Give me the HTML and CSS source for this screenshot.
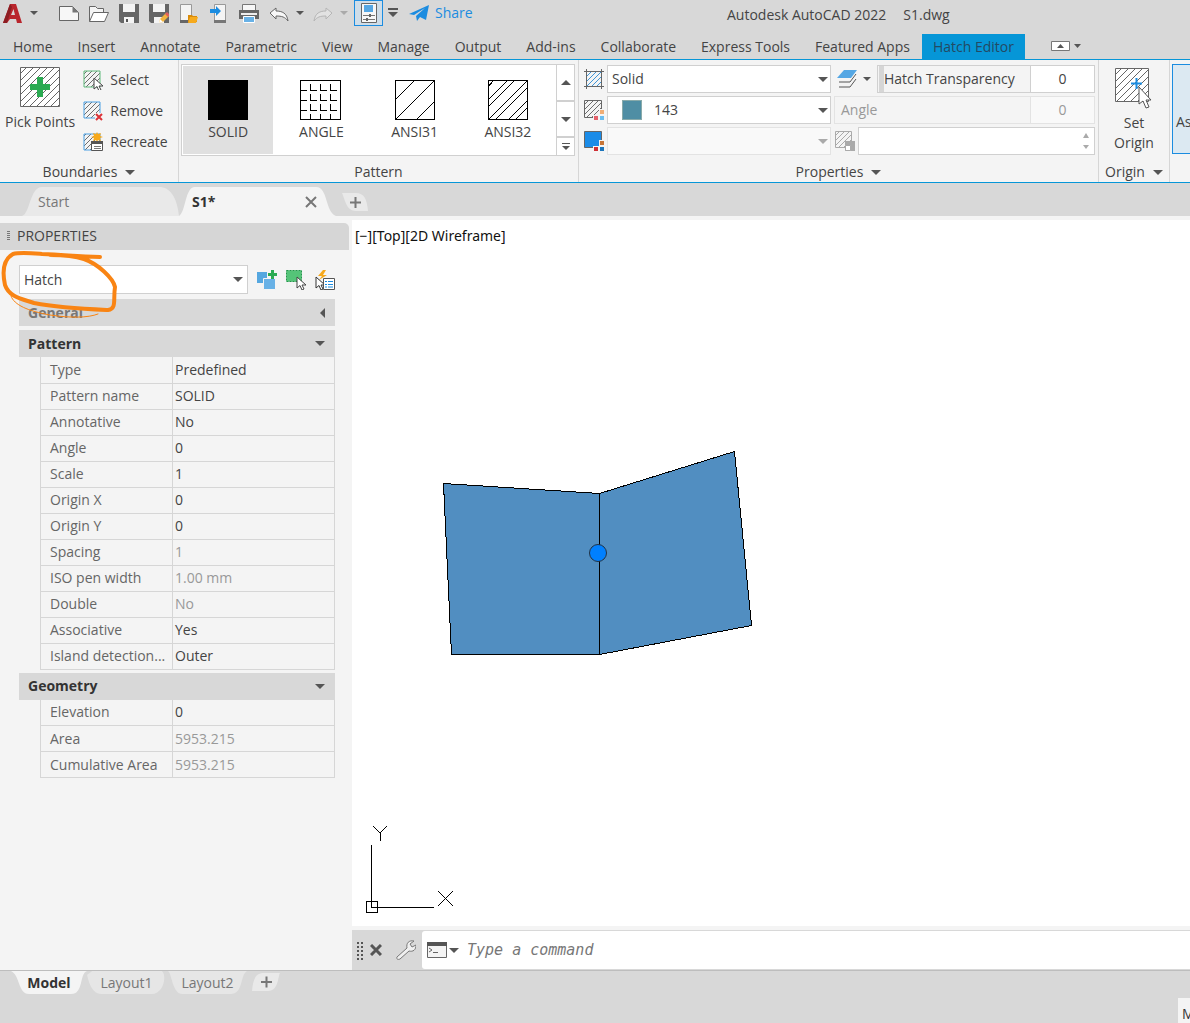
FILE: index.html
```html
<!DOCTYPE html>
<html lang="en">
<head>
<meta charset="utf-8">
<meta name="viewport" content="width=device-width, initial-scale=1">
<title>Autodesk AutoCAD 2022 - S1.dwg</title>
<link rel="stylesheet" href="styles.css">
</head>
<body>
<svg class="defs" width="0" height="0" aria-hidden="true">
  <defs>
    <pattern id="hatch" width="7" height="7" patternUnits="userSpaceOnUse"><path d="M-1 8L8-1M-1 1L1-1M6 8L8 6" stroke="#666" fill="none"/></pattern>
    <pattern id="hatch-fine" width="5" height="5" patternUnits="userSpaceOnUse"><path d="M-1 6L6-1M-1 1L1-1M4 6L6 4" stroke="#6d6d6d" fill="none"/></pattern>
    <pattern id="hatch-blue" width="5" height="5" patternUnits="userSpaceOnUse"><path d="M-1 6L6-1M-1 1L1-1M4 6L6 4" stroke="#3f95d6" fill="none"/></pattern>
    <pattern id="hatch-light" width="5" height="5" patternUnits="userSpaceOnUse"><path d="M-1 6L6-1M-1 1L1-1M4 6L6 4" stroke="#aaa" fill="none"/></pattern>
    <path id="cursor" d="M0 0V11L3 8.500L5 13L7 12L5 8H9Z"/>
  </defs>
</svg>

<header class="titlebar">
  <div class="quick">
    <button class="app" aria-label="Application menu"><svg width="20" height="20"><path d="M0 20L7 1h6l6 19h-5l-1-4H7l-3 4zM8 12h4l-1.500-6z" fill="#b9252c" fill-rule="evenodd"/><path d="M0 20L7 1l2 3-5 16z" fill="#8c1d22"/></svg><i class="arrow"></i></button>
    <button aria-label="New"><svg width="20" height="20"><path d="M.5 3.500h13l6 6v8H.5z" fill="#f7f7f7" stroke="#666"/><path d="M13.500 3.500v6h6z" fill="#777"/></svg></button>
    <button aria-label="Open"><svg width="20" height="20"><path d="M.5 18.500v-15h6l2 2h6v4" fill="#f4f4f4" stroke="#666"/><path d="M.5 18.500l4-9h15l-4 9z" fill="#fff" stroke="#666"/></svg></button>
    <button aria-label="Save"><svg width="20" height="20"><path d="M0 1h20v19H2l-2-2z" fill="#666"/><path d="M4 1h12v8H4zM5 14h10v6H5z" fill="#f4f4f4"/><path d="M7 16h2v3H7z" fill="#555"/></svg></button>
    <button aria-label="Save as"><svg width="20" height="20"><path d="M0 1h20v19H2l-2-2z" fill="#666"/><path d="M4 1h12v8H4zM5 14h10v6H5z" fill="#f4f4f4"/><path d="M10 20l1-4 6-6 3 3-6 6z" fill="#f3b43d"/><path d="M16 11l2-2 3 3-2 2z" fill="#e0605a"/><path d="M10 20l1-4 3 3z" fill="#fff"/></svg></button>
    <button aria-label="Open from mobile"><svg width="20" height="20"><path d="M1.500 1.500h11v17h-11z" fill="#f4f4f4" stroke="#999"/><path d="M1 17h9v3H1z" fill="#666"/><path d="M9 12h4l1 1h4v6H9z" fill="#d88b0b"/><path d="M11 14h8l-2 6H9z" fill="#f6aa1d"/></svg></button>
    <button aria-label="Save to mobile"><svg width="20" height="20"><path d="M5.500 1.500h11v17h-11z" fill="#f4f4f4" stroke="#999"/><path d="M5 17h12v3H5z" fill="#777"/><path d="M1 6h6V3l5 5-5 5v-3H1z" fill="#1b8ce0"/></svg></button>
    <button aria-label="Plot"><svg width="20" height="20"><path d="M3.500 1.500h13v6h-13z" fill="#f7f7f7" stroke="#777"/><path d="M0 7h20v9H0z" fill="#666"/><path d="M2 10h16v2H2z" fill="#eee"/><path d="M4.500 13.500h11v6h-11z" fill="#68b1e6" stroke="#fff"/></svg></button>
    <button aria-label="Undo"><svg width="20" height="20"><path d="M1 10l6-5v3c6 0 11 2 12 10-3-4-6-5-12-5v3z" fill="#f7f7f7" stroke="#666"/></svg></button>
    <button class="narrow" aria-label="Undo list"><i class="arrow"></i></button>
    <button aria-label="Redo"><svg width="20" height="20"><path d="M19 10l-6-5v3c-6 0-11 2-12 10 3-4 6-5 12-5v3z" fill="#e2e2e2" stroke="#b5b5b5"/></svg></button>
    <button class="narrow" aria-label="Redo list"><i class="arrow dim"></i></button>
    <button class="active" aria-label="Properties"><svg width="16" height="20"><path d="M.5.500h15v19H.5z" fill="#f7f7f7" stroke="#666"/><path d="M3 2h9v7H3z" fill="#55a7e4"/><path d="M2 12.500h12M2 16.500h12" stroke="#777"/><path d="M8 11h2v3H8zM5 15h2v3H5z" fill="#666"/></svg></button>
    <button class="more" aria-label="Customize"><svg width="12" height="10"><path d="M1 0h10v2H1zM1 4h10l-5 5z" fill="#555"/></svg></button>
    <a class="share" href="#"><svg width="20" height="18"><path d="M0 10L20 1l-3 15-6-3-3 4-1-5 9-8-11 7z" fill="#1b8ce0"/></svg>Share</a>
  </div>
  <h1 class="caption"><span>Autodesk AutoCAD 2022</span><span>S1.dwg</span></h1>
</header>

<nav class="menu">
  <a href="#">Home</a><a href="#">Insert</a><a href="#">Annotate</a><a href="#">Parametric</a><a href="#">View</a><a href="#">Manage</a><a href="#">Output</a><a href="#">Add-ins</a><a href="#">Collaborate</a><a href="#">Express Tools</a><a href="#">Featured Apps</a><a href="#" class="current">Hatch Editor</a>
  <button class="collapse" aria-label="Minimize ribbon"><svg width="30" height="11"><path d="M.5.500h18v9h-18z" fill="#fff" stroke="#777"/><path d="M6 7h7l-3.500-4zM23 3h7l-3.500 4z" fill="#555"/></svg></button>
</nav>

<section class="ribbon">
  <div class="panel boundaries">
    <div class="panel-body">
      <button class="big"><svg width="40" height="40"><path d="M.5.500h39v39H.5z" fill="#fff"/><path d="M.5.500h39v39H.5z" fill="url(#hatch)" stroke="#666"/><path d="M17 10h6v7h7v6h-7v7h-6v-7h-7v-6h7z" fill="#2bab52"/></svg>Pick Points</button>
      <div class="stack">
        <button><svg width="20" height="20"><path d="M1 1h16v16H1z" fill="url(#hatch-fine)" stroke="#5fb97a"/><use href="#cursor" x="11" y="8" fill="#fff" stroke="#444"/></svg>Select</button>
        <button><svg width="20" height="20"><path d="M1 1h16v16H1z" fill="url(#hatch-fine)" stroke="#4aa0e4"/><path d="M12 12h8v8h-8z" fill="#f4f4f4"/><path d="M13 13l6 6m0-6l-6 6" stroke="#dc3237" stroke-width="2"/></svg>Remove</button>
        <button><svg width="20" height="20"><path d="M1 2h16v16H1z" fill="url(#hatch-fine)" stroke="#4aa0e4"/><path d="M14 0l1 2 3-1-1 3 3 1-3 1 1 3-3-1-1 2-1-2-3 1 1-3-3-1 3-1-1-3 3 1z" fill="#f7a91b"/><path d="M8.500 9.500h11v9h-11z" fill="#fff" stroke="#555"/><path d="M8 9h12v3H8z" fill="#555"/><path d="M11 14.500h7M11 16.500h7" stroke="#777"/></svg>Recreate</button>
      </div>
    </div>
    <button class="panel-title">Boundaries<i class="arrow big-arrow"></i></button>
  </div>

  <div class="panel pattern">
    <div class="gallery">
      <button class="swatch selected"><svg width="40" height="40"><path d="M0 0h40v40H0z"/></svg>SOLID</button>
      <button class="swatch"><svg width="42" height="40" shape-rendering="crispEdges" fill="none" stroke="#000"><path d="M.5.500h40v39H.5zM0 10.500h7M0 20.500h7M0 30.500h7M10.500 4v6.500H17M20.500 4v6.500H27M30.500 4v6.500H37M10.500 14v6.500H17M20.500 14v6.500H27M30.500 14v6.500H37M10.500 24v6.500H17M20.500 24v6.500H27M30.500 24v6.500H37M10.500 34v6M20.500 34v6M30.500 34v6"/></svg>ANGLE</button>
      <button class="swatch"><svg width="40" height="40" shape-rendering="crispEdges" fill="none" stroke="#000"><path d="M.5.500h39v39H.5zM0 20L20 0M1 39L39 1M22 39l17-17"/></svg>ANSI31</button>
      <button class="swatch"><svg width="40" height="40" shape-rendering="crispEdges" fill="none" stroke="#000"><path d="M.5.500h39v39H.5zM0 7l6-7M0 20L20 0M0 27L27 0M1 39L39 1M8 39l31-31M21 39l18-18M28 39l11-11"/></svg>ANSI32</button>
      <div class="scroll">
        <button aria-label="Up"><i class="arrow big-arrow up"></i></button>
        <button aria-label="Down"><i class="arrow big-arrow"></i></button>
        <button aria-label="All patterns"><svg width="10" height="8"><path d="M1 .5h8" stroke="#555"/><path d="M1 3h8l-4 4z" fill="#555"/></svg></button>
      </div>
    </div>
    <div class="panel-title">Pattern</div>
  </div>

  <div class="panel props">
    <div class="fields">
      <svg width="20" height="20"><path d="M3 3h14v14H3z" fill="url(#hatch-blue)"/><path d="M0 2.500h20M0 17.500h20M2.500 0v20M17.500 0v20" stroke="#666"/></svg>
      <label class="select"><select aria-label="Hatch type"><option>Solid</option></select></label>
      <div class="pair">
        <button class="layers" aria-label="Layer"><svg width="20" height="20"><path d="M7 1h13l-6 8H0z" fill="#55a7e4"/><path d="M2 13h11l6-8M2 18h11l6-8" fill="none" stroke="#555"/></svg><i class="arrow"></i></button>
        <div class="slider"><label for="transp">Hatch Transparency</label><input id="transp" value="0"></div>
      </div>
      <svg width="20" height="20"><path d="M.5.500h17v17H.5z" fill="url(#hatch-fine)" stroke="#666"/><path d="M15 9h5v11H9v-5h6z" fill="#f4f4f4"/><path d="M16 10h4v4h-4z" fill="#f0ad75"/><path d="M10 16h4v4h-4z" fill="#e5616b"/><path d="M16 16h4v4h-4z" fill="#6abdf0"/></svg>
      <label class="select color"><i class="chip"></i><select aria-label="Hatch color"><option>143</option></select></label>
      <div class="slider off"><label for="angle">Angle</label><input id="angle" value="0" disabled></div>
      <svg width="20" height="20"><path d="M.5.500h17v16H.5z" fill="#1b8ce8" stroke="#666"/><path d="M9 15h6V9h5v11H9z" fill="#f4f4f4"/><path d="M16 10h4v4h-4z" fill="#c77436"/><path d="M10 16h4v4h-4z" fill="#cf3035"/><path d="M16 16h4v4h-4z" fill="#1b75bc"/></svg>
      <label class="select off"><select aria-label="Background color" disabled><option></option></select></label>
      <div class="pair scale">
        <svg width="20" height="20"><path d="M.5.500h16v16H.5z" fill="url(#hatch-light)" stroke="#aaa"/><path d="M10 10h10v10H10z" fill="#aaa"/><path d="M10.500 14.500h5v5h-5z" fill="#fff" stroke="#aaa"/></svg>
        <div class="spin"><input aria-label="Hatch pattern scale"><span><i class="arrow up dim"></i><i class="arrow dim"></i></span></div>
      </div>
    </div>
    <button class="panel-title">Properties<i class="arrow big-arrow"></i></button>
  </div>

  <div class="panel origin">
    <button class="big"><svg width="38" height="42"><path d="M.5.500h33v33H.5z" fill="#fff"/><path d="M.5.500h33v33H.5z" fill="url(#hatch)" stroke="#666"/><path d="M16 15.500h11M21.500 10v11" stroke="#1b8ce0" stroke-width="2"/><path d="M24 19v17l4-3 3 7 3-1-3-7h5z" fill="#fff" stroke="#555"/></svg>Set<br>Origin</button>
    <button class="panel-title">Origin<i class="arrow big-arrow"></i></button>
  </div>

  <div class="panel options"><button>As</button></div>
</section>

<nav class="doctabs">
  <a href="#" class="doctab"><svg viewBox="0 0 158 29" preserveAspectRatio="none"><path d="M0 29C8 27 8 0 20 0H138C149 0 156 10 158 29z" fill="#e9e9e9"/></svg><span>Start</span></a>
  <a href="#" class="doctab open"><svg viewBox="0 0 158 29" preserveAspectRatio="none"><path d="M0 29C7 25 6 0 16 0H138C150 0 147 25 158 29z" fill="#f4f4f4"/></svg><span>S1*</span><svg class="x" width="12" height="12"><path d="M1 1l10 10M11 1L1 11" stroke="#777" stroke-width="2"/></svg></a>
  <button class="add" aria-label="New drawing"><svg width="26" height="18"><path d="M0 0H14C22 0 25 6 26 18H14C4 18 3 6 0 0z" fill="#e9e9e9"/><path d="M8 9.500h11M13.500 4v11" stroke="#777" stroke-width="2"/></svg></button>
</nav>

<main class="work">
  <aside class="palette">
    <h2 class="palette-title"><i class="grip"></i>PROPERTIES</h2>
    <div class="palette-body">
      <div class="pick">
        <label class="select"><select aria-label="Object type"><option>Hatch</option></select></label>
        <button aria-label="Toggle PICKADD"><svg width="20" height="20"><path d="M0 2h10v11H0z" fill="#55a7e0"/><path d="M6.500 8.500h12v11h-12z" fill="#68b1e6" stroke="#f4f4f4"/><path d="M11 4.500h9M15.500 0v9" stroke="#2bab52" stroke-width="3"/></svg></button>
        <button aria-label="Select objects"><svg width="20" height="20"><path d="M.5.500h15v11H.5z" fill="#55c478" stroke="#22964a" stroke-dasharray="2 1"/><use href="#cursor" x="11" y="7" fill="#fff" stroke="#444"/></svg></button>
        <button aria-label="Quick select"><svg width="20" height="20"><path d="M8 0L3 6h4l-3 4 8-5H8l3-5z" fill="#f7a91b"/><use href="#cursor" x="1" y="7" fill="#fff" stroke="#333"/><path d="M8.500 8.500h11v11h-11z" fill="#fff" stroke="#555"/><path d="M10 11.500h2m1 0h5M10 14.500h2m1 0h5M10 17h2m1 0h5" stroke="#1b8ce0"/></svg></button>
      </div>
      <h3 class="section faded">General<i class="arrow left"></i></h3>
      <h3 class="section">Pattern<i class="arrow big-arrow"></i></h3>
      <table class="grid">
        <tr><th>Type</th><td>Predefined</td></tr>
        <tr><th>Pattern name</th><td>SOLID</td></tr>
        <tr><th>Annotative</th><td>No</td></tr>
        <tr><th>Angle</th><td>0</td></tr>
        <tr><th>Scale</th><td>1</td></tr>
        <tr><th>Origin X</th><td>0</td></tr>
        <tr><th>Origin Y</th><td>0</td></tr>
        <tr><th>Spacing</th><td class="ro">1</td></tr>
        <tr><th>ISO pen width</th><td class="ro">1.00 mm</td></tr>
        <tr><th>Double</th><td class="ro">No</td></tr>
        <tr><th>Associative</th><td>Yes</td></tr>
        <tr><th>Island detection...</th><td>Outer</td></tr>
      </table>
      <h3 class="section">Geometry<i class="arrow big-arrow"></i></h3>
      <table class="grid">
        <tr><th>Elevation</th><td>0</td></tr>
        <tr><th>Area</th><td class="ro">5953.215</td></tr>
        <tr><th>Cumulative Area</th><td class="ro">5953.215</td></tr>
      </table>
    </div>
    <svg class="scribble" width="120" height="75" fill="none" stroke="#f98413" stroke-linecap="round" stroke-linejoin="round"><path d="M100 6C75 5 65 4 42 3C30 2 20 1 13 3C4 8 2 20 5 34C9 46 22 48 34 52C60 57 85 58 108 59C117 58 113 48 115 36C113 27 98 13 84 8C75 5 62 4 50 4" stroke-width="4"/><path d="M11 45C14 54 28 60 50 64C70 67 88 67 98 63" stroke-width="1"/></svg>
  </aside>

  <div class="view">
    <div class="canvas">
      <p class="viewlabel">[−][Top][2D Wireframe]</p>
      <svg class="drawing" width="400" height="480" aria-label="Hatched drawing and UCS icon">
        <g fill="#518ec1" stroke="#000" shape-rendering="crispEdges"><path d="M88.500 39.500L244.500 49.500V210.500H96.500z"/><path d="M244.500 49.500L379.500 7.500L396.500 181.500L244.500 210.500z"/></g>
        <circle cx="243" cy="109" r="8.500" fill="#0080ff" stroke="#234"/>
        <g fill="none" stroke="#000" shape-rendering="crispEdges"><path d="M16.500 401V463.500H79M11.500 457.500h11v11h-11zM18 382l7 7 7-7M25.500 389v8M83 447l15 15M98 447l-15 15"/></g>
      </svg>
    </div>
    <div class="command">
      <i class="grip wide"></i>
      <button aria-label="Close"><svg width="12" height="12"><path d="M1 1l10 10M11 1L1 11" stroke="#555" stroke-width="3"/></svg></button>
      <button class="wrench" aria-label="Customize"><svg width="20" height="20"><path d="M1 17L11 8C10 3 13 0 18 1L14 4l2 3 4-2c0 5-3 7-7 6L4 19c-2 1-4 0-3-2z" fill="#f0f0f0" stroke="#777"/></svg></button>
      <div class="entry"><svg width="32" height="16"><path d="M.5.500h19v15H.5z" fill="#f4f4f4" stroke="#666"/><path d="M0 0h20v4H0z" fill="#555"/><path d="M2 6l3 2-3 2M6 10.500h5" stroke="#666" fill="none"/><path d="M22 6h10l-5 5z" fill="#555"/></svg><input aria-label="Command" placeholder="Type a command"></div>
    </div>
  </div>
</main>

<footer class="status">
  <nav class="layouts">
    <a href="#" class="open"><svg viewBox="0 0 76 23" preserveAspectRatio="none"><path d="M0 0H76C68 3 73 23 60 23H18C7 23 9 4 0 0z" fill="#f4f4f4"/></svg><span>Model</span></a>
    <a href="#"><svg viewBox="0 0 76 23" preserveAspectRatio="none"><path d="M5 0H72C77 4 74 23 62 23H14C3 23 1 6 0 4z" fill="#e6e6e6"/></svg><span>Layout1</span></a>
    <a href="#"><svg viewBox="0 0 76 23" preserveAspectRatio="none"><path d="M0 0H76C69 4 73 23 60 23H14C4 23 4 3 0 0z" fill="#e6e6e6"/></svg><span>Layout2</span></a>
    <button class="add" aria-label="New layout"><svg width="28" height="20"><path d="M12 1h16c-2 2-1 18-12 18H0C1 8 3 1 12 1z" fill="#e9e9e9"/><path d="M9 10h11M14.500 4.500v11" stroke="#777" stroke-width="2"/></svg></button>
  </nav>
  <button class="mode">M</button>
</footer>
</body>
</html>
```
FILE: styles.css
```css
* { box-sizing: border-box; }

body {
  margin: 0;
  min-height: 100vh;
  display: flex;
  flex-direction: column;
  overflow-x: hidden;
  background: #d8d8d8;
  color: #444;
  font: 14px/20px "Open Sans", "Noto Sans", sans-serif;
}

.defs { position: absolute; }
button, input, select { font: inherit; color: inherit; border: 0; padding: 0; background: none; }
button, a { color: inherit; text-decoration: none; white-space: nowrap; }
button svg, a svg { flex: none; }
h1, h2, h3, p { margin: 0; font-size: 14px; font-weight: 400; }

.arrow {
  display: inline-block;
  flex: none;
  border: 4px solid transparent;
  border-top-color: #555;
  border-bottom: 0;
}
.big-arrow { border-width: 5px; border-bottom: 0; }
.up { border-top: 0; border-bottom: 5px solid #555; }
.left { border: 5px solid transparent; border-right-color: #555; border-left: 0; }
.dim { border-top-color: #aaa; }
.up.dim { border-bottom-color: #aaa; }

/* Title bar */
.titlebar { display: flex; height: 29px; }
.quick { display: flex; gap: 10px; padding-left: 3px; height: 26px; align-items: center; }
.quick button { display: flex; align-items: center; justify-content: center; }
.quick .app { gap: 7px; margin-right: 11px; }
.quick .narrow { width: 8px; margin: 0 -1px 0 -3px; }
.quick .active { width: 29px; height: 26px; margin-left: -3px; border: 1px solid #1b8ce0; background: #cfdde8; }
.quick .more { margin-left: -6px; }
.share { display: flex; align-items: center; gap: 6px; color: #1b8ce0; }
.caption { flex: 1; display: flex; justify-content: center; gap: 17px; padding: 5px 0 0 14px; white-space: nowrap; }

/* Ribbon tabs */
.menu { display: flex; gap: 25px; padding: 5px 0 0 13px; height: 30px; white-space: nowrap; }
.menu a { line-height: 25px; }
.menu .current { padding: 0 11px; margin: 0 1px 0 -13px; background: #0696d7; color: #234a63; }
.collapse { display: flex; align-items: center; }

/* Ribbon */
.ribbon {
  display: grid;
  grid-template-columns: 179px minmax(0, 400fr) minmax(0, 520fr) 71px 20px;
  height: 124px;
  border: solid #0696d7;
  border-width: 1px 0;
  background: #f4f4f4;
}
.panel { display: flex; flex-direction: column; border-right: 1px solid #d6d6d6; }
.panel-title { display: flex; align-items: center; justify-content: center; gap: 8px; height: 20px; margin-top: auto; }
.panel-body { display: flex; gap: 8px; padding: 7px 0 0 5px; }
.big { display: flex; flex-direction: column; align-items: center; gap: 5px; }
.stack { display: flex; flex-direction: column; gap: 11px; padding-top: 3px; }
.stack button { display: flex; align-items: center; gap: 7px; height: 20px; }

.gallery { display: flex; gap: 3px; margin: 4px 3px 0 2px; height: 92px; padding: 1px 0 1px 1px; border: 1px solid #d0d0d0; background: #fff; }
.swatch { flex: 1; display: flex; flex-direction: column; align-items: center; gap: 2px; padding-top: 14px; }
.swatch.selected { background: #e0e0e0; }
.scroll { display: grid; grid-template-rows: 35fr 36fr 19fr; width: 18px; margin: -1px 0; border-left: 1px solid #d0d0d0; }
.scroll button { display: flex; align-items: center; justify-content: center; }
.scroll button + button { border-top: 2px solid #d0d0d0; }

.fields { display: grid; grid-template-columns: 20px 1fr 261px; gap: 3px; align-items: center; padding: 5px 3px 0 5px; }
.select { position: relative; display: flex; align-items: center; height: 28px; border: 1px solid #d0d0d0; background: #fff; }
.select select { flex: 1; height: 100%; padding-left: 4px; appearance: none; }
.select::after { content: ""; position: absolute; right: 2px; border: 5px solid transparent; border-top-color: #555; border-bottom: 0; }
.select.off { background: #f9f9f9; border-color: #e3e3e3; }
.select.off::after { border-top-color: #aaa; }
.chip { width: 20px; height: 20px; margin: 0 8px 0 14px; border: 1px solid #8aa; background: #4f8ea4; }
.pair { display: flex; align-items: center; gap: 6px; padding-left: 3px; }
.layers { display: flex; align-items: center; gap: 6px; }
.slider { flex: 1; display: flex; height: 28px; border: 1px solid #d0d0d0; background: linear-gradient(90deg, #f4f4f4 1px, #d6d6d6 1px 6px, #f4f4f4 6px); }
.slider label { flex: 1; padding-left: 6px; line-height: 26px; white-space: nowrap; }
.slider input { width: 64px; text-align: center; border-left: 1px solid #d0d0d0; background: #fff; }
.slider.off { border-color: #e3e3e3; background: #f4f4f4; color: #999; }
.slider.off input { background: #f9f9f9; border-color: #e3e3e3; }
.scale { gap: 3px; padding-left: 1px; }
.spin { flex: 1; display: flex; height: 28px; border: 1px solid #d0d0d0; background: #fff; }
.spin input { flex: 1; min-width: 0; }
.spin span { display: flex; flex-direction: column; align-items: center; justify-content: center; gap: 7px; width: 16px; }
.spin .arrow { border-left-width: 3px; border-right-width: 3px; }

.origin .big { padding: 8px 0 0; gap: 3px; }
.options { border: 0; overflow: hidden; padding: 4px 0 0 2px; }
.options button { width: 40px; height: 90px; flex: none; padding: 26px 0 0 3px; text-align: left; border: 1px solid #1b8ce0; background: #dce9f2; }

/* Drawing tabs */
.doctabs { display: flex; height: 33px; padding: 4px 0 0 22px; }
.doctab { position: relative; display: flex; align-items: center; width: 157px; padding: 1px 16px 0; color: #777; }
.doctab > svg:first-child, .layouts a svg { position: absolute; left: 0; top: 0; width: 100%; height: 100%; }
.doctab span, .doctab .x, .layouts span { position: relative; }
.doctab.open { color: #333; font-weight: 700; padding: 0 19px 0 13px; justify-content: space-between; }
.doctabs .add { margin-left: 6px; padding-top: 6px; }

/* Work area */
.work { flex: 1; display: grid; grid-template-columns: 352px minmax(0, 1fr); background: #f4f4f4; }
.palette { position: relative; padding-top: 7px; }
.palette-title { display: flex; align-items: center; gap: 7px; width: 349px; height: 27px; padding: 0 0 2px 7px; border-radius: 0 5px 0 0; background: #d6d6d6; }
.grip { width: 3px; height: 9px; background: repeating-linear-gradient(#777 0 1px, transparent 1px 2px); }
.palette-body { padding: 15px 17px 0 19px; }
.pick { display: flex; align-items: center; gap: 9px; margin-bottom: 5px; }
.pick .select { width: 229px; height: 29px; }
.pick .select::after { right: 4px; }
.pick button { display: flex; }
.section { display: flex; align-items: center; justify-content: space-between; height: 27px; margin-bottom: 4px; padding: 0 10px 0 9px; background: #d8d8d8; color: #333; font-weight: 700; }
.faded { color: #777; }
.grid { width: 295px; margin: -4px 0 3px 21px; border-collapse: collapse; table-layout: fixed; }
.grid th, .grid td { height: 26px; padding: 0 2px; border: 1px solid #d6d6d6; border-top: 0; text-align: left; font-weight: 400; white-space: nowrap; }
.grid th { width: 132px; padding: 0 0 0 9px; color: #666; }
.grid .ro { color: #999; }
.scribble { position: absolute; left: 0; top: 35px; pointer-events: none; }

.view { display: flex; flex-direction: column; padding-top: 4px; }
.canvas { position: relative; flex: 1; background: #fff; }
.viewlabel { padding: 6px 3px; color: #111; font-family: "Noto Sans", sans-serif; }
.drawing { position: absolute; left: 3px; top: 224px; }
.command { display: flex; align-items: center; height: 40px; margin-top: 4px; padding-left: 5px; background: #d8d8d8; }
.command button { display: flex; margin-left: 7px; }
.command .wrench { margin-left: 14px; }
.wide { width: 6px; height: 20px; background: repeating-linear-gradient(#d8d8d8 0 2px, transparent 2px 4px), linear-gradient(90deg, #555 2px, transparent 2px 4px, #555 4px); }
.entry { flex: 1; display: flex; align-items: center; gap: 8px; height: 38px; margin-left: 6px; padding-left: 5px; border-radius: 3px 0 0 3px; background: #fff; }
.entry input { flex: 1; min-width: 0; height: 36px; font: italic 15px "DejaVu Sans Mono", monospace; }
.entry input::placeholder { color: #777; opacity: 1; }

/* Layout tabs */
.status { display: flex; justify-content: space-between; height: 53px; border-top: 1px solid #bdbdbd; }
.layouts { display: flex; gap: 2px; padding-left: 11px; height: 23px; }
.layouts a { position: relative; width: 79px; text-align: center; line-height: 24px; color: #777; }
.layouts .open { width: 76px; margin-right: -2px; color: #333; font-weight: 700; }
.layouts .add { margin-left: 3px; padding-top: 1px; }
.mode { align-self: flex-end; width: 12px; height: 25px; padding: 6px 0 0 4px; overflow: hidden; text-align: left; background: #f4f4f4; color: #333; }
```
